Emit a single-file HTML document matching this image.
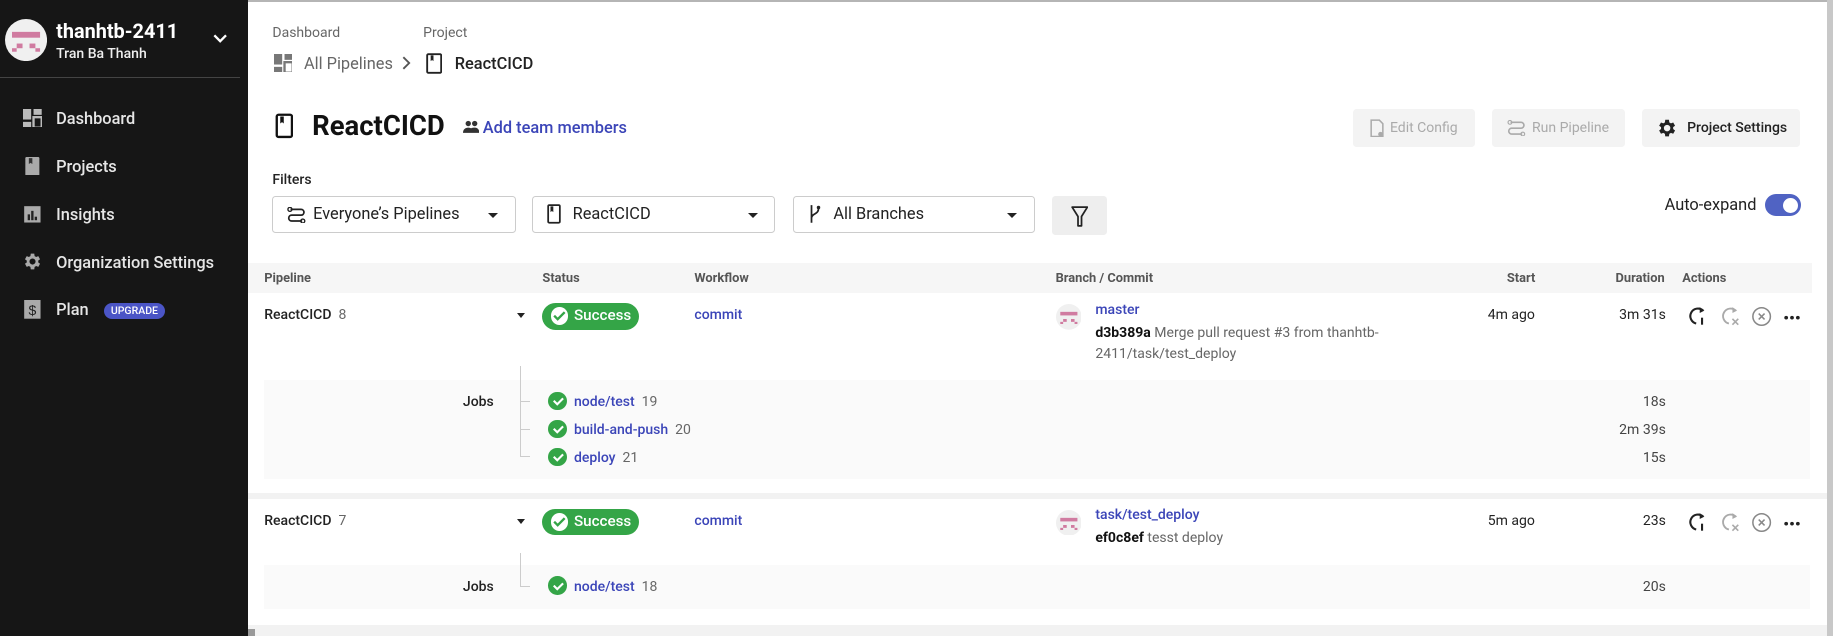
<!DOCTYPE html>
<html><head><meta charset="utf-8">
<style>
*{margin:0;padding:0;box-sizing:border-box}
html,body{width:1833px;height:636px;overflow:hidden;background:#fff}
#w{position:relative;width:1568px;height:544px;zoom:1.169;font-family:"Roboto","Liberation Sans",sans-serif;color:#222;overflow:hidden}
.a{position:absolute;white-space:nowrap}
#sb{position:absolute;left:0;top:0;width:212px;height:544px;background:#161616}
.nav{position:absolute;left:48px;font-size:14px;color:#e6e6e6;font-weight:500}
.ni{position:absolute;left:20px;width:16px;height:16px}
.blue{color:#3b45b8}
.btn{position:absolute;top:93px;height:33px;background:#f3f3f3;border-radius:3px;font-size:12px;display:flex;align-items:center;justify-content:center;gap:5px}
.dd{position:absolute;top:168px;height:31px;border:1px solid #ccc;border-radius:3px;background:#fff;font-size:14px}
.dd .t{position:absolute;left:34px;top:6px}
.dd .c{position:absolute;right:14px;top:13px;border-left:5px solid transparent;border-right:5px solid transparent;border-top:5px solid #222}
.th{position:absolute;top:232px;font-size:11px;font-weight:700;color:#555}
.pill{position:absolute;left:464px;width:83px;height:23px;border-radius:12px;background:#34a547;color:#fff;font-size:13px;font-weight:500}
.pill .k{position:absolute;left:7px;top:4px;width:15px;height:15px;border-radius:50%;background:#fff}
.pill span{position:absolute;left:27px;top:3px}
.tri{position:absolute;left:442px;border-left:4px solid transparent;border-right:4px solid transparent;border-top:5px solid #222}
.chk{position:absolute;left:469px;width:16px;height:16px;border-radius:50%;background:#34a547}
.r{text-align:right}
.g{color:#666}
</style></head><body><div id="w">
<div class="a" style="left:212px;top:0;width:1356px;height:2px;background:#b5b5b5"></div>
<div class="a" style="left:1563px;top:0;width:5px;height:544px;background:#c8c8c8"></div>

<div id="sb">
 <svg class="a" style="left:4px;top:16px" width="36" height="36" viewBox="0 0 36 36"><circle cx="18" cy="18" r="18" fill="#f0f0f0"/><rect x="6" y="11" width="24" height="5" fill="#d07ba0"/><rect x="10" y="21" width="5" height="4" fill="#d07ba0"/><rect x="21" y="21" width="5" height="4" fill="#d07ba0"/><rect x="6" y="25" width="4" height="3" fill="#d07ba0"/><rect x="26" y="25" width="4" height="3" fill="#d07ba0"/></svg>
 <div class="a" style="left:48px;top:17px;font-size:17px;font-weight:700;color:#fff">thanhtb-2411</div>
 <div class="a" style="left:48px;top:39px;font-size:12px;color:#eee;font-weight:500">Tran Ba Thanh</div>
 <svg class="a" style="left:181px;top:28px" width="14" height="10" viewBox="0 0 14 10"><path d="M2 2l5 5 5-5" stroke="#fff" stroke-width="2" fill="none"/></svg>
 <div class="a" style="left:0;top:66px;width:205px;height:1px;background:#444"></div>
 <svg class="ni" style="top:93px" viewBox="0 0 16 16" fill="#bbb"><rect x="0" y="0" width="7" height="9"/><rect x="9" y="0" width="7" height="5"/><rect x="0" y="11" width="7" height="5"/><rect x="9" y="7" width="7" height="9" fill="none" stroke="#bbb" stroke-width="2"/></svg>
 <div class="nav" style="top:93px">Dashboard</div>
 <svg class="ni" style="top:134px" viewBox="0 0 16 16"><rect x="2" y="0" width="12" height="16" rx="1" fill="#aaa"/><path d="M5 1v5l1.5-1 1.5 1V1z" fill="#333"/></svg>
 <div class="nav" style="top:134px">Projects</div>
 <svg class="ni" style="top:175px" viewBox="0 0 16 16"><rect x="1" y="1" width="14" height="14" fill="#aaa"/><rect x="4" y="8" width="2" height="5" fill="#222"/><rect x="7" y="5" width="2" height="8" fill="#222"/><rect x="10" y="10" width="2" height="3" fill="#222"/></svg>
 <div class="nav" style="top:175px">Insights</div>
 <svg class="ni" style="top:215px;left:19px;width:18px;height:18px" viewBox="0 0 24 24"><path fill="#aaa" d="M19.1 13a7.5 7.5 0 000-2l2.1-1.6-2-3.5-2.5 1a7 7 0 00-1.7-1L14.6 3h-4l-.4 2.9a7 7 0 00-1.7 1l-2.5-1-2 3.5L6.1 11a7.5 7.5 0 000 2L4 14.6l2 3.5 2.5-1a7 7 0 001.7 1l.4 2.9h4l.4-2.9a7 7 0 001.7-1l2.5 1 2-3.5zM12.6 15.5a3.5 3.5 0 110-7 3.5 3.5 0 010 7z" transform="translate(-0.6,0)"/></svg>
 <div class="nav" style="top:216px">Organization Settings</div>
 <svg class="ni" style="top:257px" viewBox="0 0 16 16"><rect x="1" y="0" width="14" height="16" fill="#aaa"/><text x="8" y="13" font-size="12" text-anchor="middle" fill="#222" font-family="Liberation Sans">$</text></svg>
 <div class="nav" style="top:257px">Plan</div>
 <div class="a" style="left:89px;top:259px;width:52px;height:14px;border-radius:7px;background:#4b55c6;color:#fff;font-size:9px;font-weight:500;text-align:center;line-height:14px">UPGRADE</div>
</div>

<div class="a g" style="left:233px;top:21px;font-size:12px">Dashboard</div>
<div class="a g" style="left:362px;top:21px;font-size:12px">Project</div>
<svg class="a" style="left:234px;top:46px" width="16" height="16" viewBox="0 0 16 16" fill="#777"><rect x="0" y="0" width="7" height="9"/><rect x="9" y="0" width="7" height="5"/><rect x="0" y="11" width="7" height="5"/><rect x="9" y="7" width="7" height="9" fill="none" stroke="#777" stroke-width="2"/></svg>
<div class="a g" style="left:260px;top:46px;font-size:14px">All Pipelines</div>
<svg class="a" style="left:343px;top:48px" width="10" height="12" viewBox="0 0 10 12"><path d="M2 1l5 5-5 5" stroke="#555" stroke-width="1.6" fill="none"/></svg>
<svg class="a" style="left:364px;top:45px" width="14" height="18" viewBox="0 0 14 18"><rect x="1" y="1" width="12" height="16" rx="1" fill="none" stroke="#222" stroke-width="1.6"/><path d="M4 2v5l1.2-1 1.2 1V2z" fill="#222"/></svg>
<div class="a" style="left:389px;top:46px;font-size:14px;font-weight:500">ReactCICD</div>

<svg class="a" style="left:235px;top:97px" width="16" height="22" viewBox="0 0 16 22"><rect x="1.5" y="1.5" width="13" height="19" rx="1.5" fill="none" stroke="#111" stroke-width="2"/><path d="M4.5 3v6l1.5-1.2 1.5 1.2V3z" fill="#111"/></svg>
<div class="a" style="left:267px;top:94px;font-size:23.5px;font-weight:700;color:#111">ReactCICD</div>
<svg class="a" style="left:396px;top:103px" width="14" height="11" viewBox="0 0 14 11" fill="#333"><circle cx="4.5" cy="3" r="2.3"/><circle cx="10" cy="3" r="2.3"/><path d="M0 11c0-3 2-4.5 4.5-4.5S9 8 9 11zM8 11c0-2 0-3-1-4 1-.5 2-.5 3-.5 2.5 0 4 1.5 4 4.5z"/></svg>
<div class="a blue" style="left:413px;top:101px;font-size:14px;font-weight:500">Add team members</div>

<div class="btn" style="left:1157px;width:105px;color:#aaa"><svg width="12" height="16" viewBox="0 0 12 16"><path d="M1 1h7l3 3v11H1z" fill="none" stroke="#aaa" stroke-width="1.3"/><circle cx="9" cy="13" r="2" fill="#aaa"/></svg>Edit Config</div>
<div class="btn" style="left:1276px;width:114px;color:#aaa"><svg width="16" height="14" viewBox="0 0 16 14"><path d="M3 2h9a2.5 2.5 0 010 5H4a2.5 2.5 0 000 5h9" fill="none" stroke="#aaa" stroke-width="1.4"/><circle cx="2.5" cy="2" r="1.6" fill="none" stroke="#aaa"/><circle cx="13.5" cy="12" r="1.6" fill="none" stroke="#aaa"/></svg>Run Pipeline</div>
<div class="btn" style="left:1405px;width:135px;color:#222;font-weight:500"><svg width="19" height="19" viewBox="0 0 24 24"><path fill="#222" transform="translate(-0.6,0)" d="M19.1 13a7.5 7.5 0 000-2l2.1-1.6-2-3.5-2.5 1a7 7 0 00-1.7-1L14.6 3h-4l-.4 2.9a7 7 0 00-1.7 1l-2.5-1-2 3.5L6.1 11a7.5 7.5 0 000 2L4 14.6l2 3.5 2.5-1a7 7 0 001.7 1l.4 2.9h4l.4-2.9a7 7 0 001.7-1l2.5 1 2-3.5zM12.6 15.5a3.5 3.5 0 110-7 3.5 3.5 0 010 7z"/></svg>&nbsp;Project Settings</div>

<div class="a" style="left:233px;top:147px;font-size:12px;font-weight:500">Filters</div>
<div class="dd" style="left:233px;width:208px"><svg class="a" style="left:12px;top:8px" width="16" height="14" viewBox="0 0 16 14"><path d="M3 2h9a2.5 2.5 0 010 5H4a2.5 2.5 0 000 5h9" fill="none" stroke="#222" stroke-width="1.5"/><circle cx="2.5" cy="2" r="1.7" fill="none" stroke="#222" stroke-width="1.2"/><circle cx="13.5" cy="12" r="1.7" fill="none" stroke="#222" stroke-width="1.2"/></svg><span class="t">Everyone’s Pipelines</span><i class="c"></i></div>
<div class="dd" style="left:455px;width:208px"><svg class="a" style="left:12px;top:6px" width="12" height="17" viewBox="0 0 12 17"><rect x="1" y="1" width="10" height="15" rx="1" fill="none" stroke="#222" stroke-width="1.5"/><path d="M3 2v5l1.2-1 1.2 1V2z" fill="#222"/></svg><span class="t">ReactCICD</span><i class="c"></i></div>
<div class="dd" style="left:678px;width:207px"><svg class="a" style="left:12px;top:6px" width="12" height="17" viewBox="0 0 12 17"><path d="M3 1v15M3 12c0-4 6-3 6-8" fill="none" stroke="#222" stroke-width="1.5"/><circle cx="9" cy="3" r="1.5" fill="#222"/></svg><span class="t">All Branches</span><i class="c"></i></div>
<div class="a" style="left:900px;top:168px;width:47px;height:33px;background:#eee;border-radius:3px"><svg class="a" style="left:16px;top:8px" width="15" height="18" viewBox="0 0 15 18"><path d="M1 1h13l-5 8v8H6V9z" fill="none" stroke="#222" stroke-width="1.5" stroke-linejoin="round"/></svg></div>

<div class="a" style="left:1424px;top:167px;font-size:14px">Auto-expand</div>
<div class="a" style="left:1510px;top:166px;width:31px;height:19px;border-radius:10px;background:#5063c3"><div class="a" style="left:15px;top:3px;width:13px;height:13px;border-radius:50%;background:#fff"></div></div>

<div class="a" style="left:212px;top:225px;width:1338px;height:26px;background:#f6f6f6"></div>
<div class="th" style="left:226px">Pipeline</div>
<div class="th" style="left:464px">Status</div>
<div class="th" style="left:594px">Workflow</div>
<div class="th" style="left:903px">Branch / Commit</div>
<div class="th" style="left:1289px">Start</div>
<div class="th" style="left:1382px">Duration</div>
<div class="th" style="left:1439px">Actions</div>

<!-- row 1 -->
<div class="a" style="left:226px;top:263px;font-size:12px;font-weight:500">ReactCICD <span class="g" style="font-weight:400">&nbsp;8</span></div>
<i class="tri" style="top:268px"></i>
<div class="pill" style="top:259px"><i class="k"></i><svg class="a" style="left:9px;top:7px" width="11" height="9" viewBox="0 0 11 9"><path d="M1 4l3 3 6-6" stroke="#34a547" stroke-width="2" fill="none"/></svg><span>Success</span></div>
<div class="a blue" style="left:594px;top:263px;font-size:12px;font-weight:500">commit</div>
<svg class="a" style="left:903px;top:260px" width="22" height="22" viewBox="0 0 36 36"><circle cx="18" cy="18" r="18" fill="#f0f0f0"/><rect x="6" y="11" width="24" height="5" fill="#d07ba0"/><rect x="10" y="21" width="5" height="4" fill="#d07ba0"/><rect x="21" y="21" width="5" height="4" fill="#d07ba0"/><rect x="6" y="25" width="4" height="3" fill="#d07ba0"/><rect x="26" y="25" width="4" height="3" fill="#d07ba0"/></svg>
<div class="a blue" style="left:937px;top:258px;font-size:12px;font-weight:500">master</div>
<div class="a" style="left:937px;top:276px;font-size:12px;line-height:18px;white-space:normal;width:260px"><b style="font-weight:700;color:#111">d3b389a</b> <span class="g">Merge pull request #3 from thanhtb-2411/task/test_deploy</span></div>
<div class="a r" style="left:1233px;width:80px;top:263px;font-size:12px">4m ago</div>
<div class="a r" style="left:1345px;width:80px;top:263px;font-size:12px">3m 31s</div>
<svg class="a" style="left:1444px;top:262px" width="100" height="18" viewBox="0 0 100 18">
 <path d="M13 4A6.5 6.5 0 1 0 7 15" fill="none" stroke="#222" stroke-width="1.8"/><path d="M10 1l4 3-4 2z" fill="#222"/><path d="M12 10v6" stroke="#222" stroke-width="1.8"/>
 <g transform="translate(28,0)"><path d="M13 4A6.5 6.5 0 1 0 7 15" fill="none" stroke="#aaa" stroke-width="1.6"/><path d="M10 1l4 3-4 2z" fill="#aaa"/><path d="M10 11l5 5M15 11l-5 5" stroke="#aaa" stroke-width="1.4"/></g>
 <g transform="translate(55,0)"><circle cx="8" cy="9" r="7.5" fill="none" stroke="#888" stroke-width="1.3"/><path d="M5.5 6.5l5 5M10.5 6.5l-5 5" stroke="#888" stroke-width="1.3"/></g>
 <circle cx="84" cy="10" r="1.6" fill="#222"/><circle cx="89" cy="10" r="1.6" fill="#222"/><circle cx="94" cy="10" r="1.6" fill="#222"/>
</svg>

<div class="a" style="left:226px;top:325px;width:1322px;height:85px;background:#fafafa"></div>
<div class="a" style="left:396px;top:337px;font-size:12px;font-weight:500">Jobs</div>
<div class="a" style="left:445px;top:313px;width:1px;height:78px;background:#ccc"></div>
<div class="a" style="left:445px;top:343px;width:8px;height:1px;background:#ccc"></div>
<div class="a" style="left:445px;top:367px;width:8px;height:1px;background:#ccc"></div>
<div class="a" style="left:445px;top:390px;width:8px;height:1px;background:#ccc"></div>
<div class="chk" style="top:335px"></div><div class="chk" style="top:359px"></div><div class="chk" style="top:383px"></div>
<svg class="a" style="left:472px;top:339px" width="11" height="60" viewBox="0 0 11 60"><path d="M1.5 4l3 3 5-5M1.5 28l3 3 5-5M1.5 52l3 3 5-5" stroke="#fff" stroke-width="1.8" fill="none"/></svg>
<div class="a" style="left:491px;top:337px;font-size:12px"><span class="blue" style="font-weight:500">node/test</span> <span class="g">&nbsp;19</span></div>
<div class="a" style="left:491px;top:361px;font-size:12px"><span class="blue" style="font-weight:500">build-and-push</span> <span class="g">&nbsp;20</span></div>
<div class="a" style="left:491px;top:385px;font-size:12px"><span class="blue" style="font-weight:500">deploy</span> <span class="g">&nbsp;21</span></div>
<div class="a r" style="left:1345px;width:80px;top:337px;font-size:12px;color:#444">18s</div>
<div class="a r" style="left:1345px;width:80px;top:361px;font-size:12px;color:#444">2m 39s</div>
<div class="a r" style="left:1345px;width:80px;top:385px;font-size:12px;color:#444">15s</div>

<div class="a" style="left:212px;top:422px;width:1351px;height:5px;background:#f2f2f2"></div>

<!-- row 2 -->
<div class="a" style="left:226px;top:439px;font-size:12px;font-weight:500">ReactCICD <span class="g" style="font-weight:400">&nbsp;7</span></div>
<i class="tri" style="top:444px"></i>
<div class="pill" style="top:435px"><i class="k"></i><svg class="a" style="left:9px;top:7px" width="11" height="9" viewBox="0 0 11 9"><path d="M1 4l3 3 6-6" stroke="#34a547" stroke-width="2" fill="none"/></svg><span>Success</span></div>
<div class="a blue" style="left:594px;top:439px;font-size:12px;font-weight:500">commit</div>
<svg class="a" style="left:903px;top:436px" width="22" height="22" viewBox="0 0 36 36"><circle cx="18" cy="18" r="18" fill="#f0f0f0"/><rect x="6" y="11" width="24" height="5" fill="#d07ba0"/><rect x="10" y="21" width="5" height="4" fill="#d07ba0"/><rect x="21" y="21" width="5" height="4" fill="#d07ba0"/><rect x="6" y="25" width="4" height="3" fill="#d07ba0"/><rect x="26" y="25" width="4" height="3" fill="#d07ba0"/></svg>
<div class="a blue" style="left:937px;top:434px;font-size:12px;font-weight:500">task/test_deploy</div>
<div class="a" style="left:937px;top:452px;font-size:12px;line-height:18px"><b style="color:#111">ef0c8ef</b> <span class="g">tesst deploy</span></div>
<div class="a r" style="left:1233px;width:80px;top:439px;font-size:12px">5m ago</div>
<div class="a r" style="left:1345px;width:80px;top:439px;font-size:12px">23s</div>
<svg class="a" style="left:1444px;top:438px" width="100" height="18" viewBox="0 0 100 18">
 <path d="M13 4A6.5 6.5 0 1 0 7 15" fill="none" stroke="#222" stroke-width="1.8"/><path d="M10 1l4 3-4 2z" fill="#222"/><path d="M12 10v6" stroke="#222" stroke-width="1.8"/>
 <g transform="translate(28,0)"><path d="M13 4A6.5 6.5 0 1 0 7 15" fill="none" stroke="#aaa" stroke-width="1.6"/><path d="M10 1l4 3-4 2z" fill="#aaa"/><path d="M10 11l5 5M15 11l-5 5" stroke="#aaa" stroke-width="1.4"/></g>
 <g transform="translate(55,0)"><circle cx="8" cy="9" r="7.5" fill="none" stroke="#888" stroke-width="1.3"/><path d="M5.5 6.5l5 5M10.5 6.5l-5 5" stroke="#888" stroke-width="1.3"/></g>
 <circle cx="84" cy="10" r="1.6" fill="#222"/><circle cx="89" cy="10" r="1.6" fill="#222"/><circle cx="94" cy="10" r="1.6" fill="#222"/>
</svg>

<div class="a" style="left:226px;top:483px;width:1322px;height:38px;background:#fafafa"></div>
<div class="a" style="left:396px;top:495px;font-size:12px;font-weight:500">Jobs</div>
<div class="a" style="left:445px;top:473px;width:1px;height:28px;background:#ccc"></div>
<div class="a" style="left:445px;top:501px;width:8px;height:1px;background:#ccc"></div>
<div class="chk" style="top:493px"></div>
<svg class="a" style="left:472px;top:497px" width="11" height="10" viewBox="0 0 11 10"><path d="M1.5 4l3 3 5-5" stroke="#fff" stroke-width="1.8" fill="none"/></svg>
<div class="a" style="left:491px;top:495px;font-size:12px"><span class="blue" style="font-weight:500">node/test</span> <span class="g">&nbsp;18</span></div>
<div class="a r" style="left:1345px;width:80px;top:495px;font-size:12px;color:#444">20s</div>

<div class="a" style="left:212px;top:535px;width:1351px;height:9px;background:#f2f2f2"></div>
<div class="a" style="left:212px;top:538px;width:6px;height:6px;background:#999"></div>
</div></body></html>
